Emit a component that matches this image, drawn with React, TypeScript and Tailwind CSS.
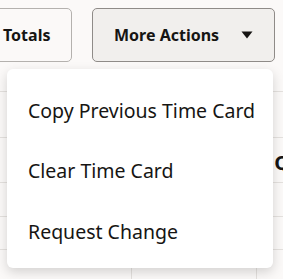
import React from "react";

export default function App() {
  const font = { fontFamily: '"Noto Sans", "Open Sans", sans-serif' };
  return (
    <div
      className="relative w-[283px] h-[279px] overflow-hidden bg-[#fbf9f8] text-[#161513]"
      style={font}
    >
      <div className="flex items-start pt-[8px] gap-[20px]">
        <button className="ml-[-12px] h-[54px] w-[84px] pl-[14px] text-left rounded-[5px] border border-[#b4b1ae] bg-[#fbf9f8] text-[16px] font-bold">
          Totals
        </button>
        <button className="h-[54px] w-[183px] pl-[21px] pr-[21px] rounded-[5px] border border-[#8f8b88] bg-[#f1efed] text-[16px] font-bold flex items-center justify-between">
          <span>More Actions</span>
          <svg width="12" height="8" viewBox="0 0 12 8">
            <path d="M0.5 0.5 H11.5 L6 7.5 Z" fill="#161513" />
          </svg>
        </button>
      </div>
      <div className="flex flex-col">
        <div className="h-[30px] border-b border-[#e4e1de]" />
        <div className="h-[46px] border-b border-[#e4e1de]" />
        <div className="h-[45px] border-b border-[#e4e1de] flex justify-end items-end pb-[9px]">
          <span className="font-bold text-[20px] leading-none mr-[-7px]">Q</span>
        </div>
        <div className="h-[34px] border-b border-[#e4e1de]" />
        <div className="h-[33px] border-b border-[#e4e1de]" />
        <div className="h-[40px] flex">
          <div className="w-[132px] border-r border-[#e4e1de]" />
          <div className="w-[125px] border-r border-[#e4e1de]" />
        </div>
      </div>
      <div className="absolute left-[7px] top-[69px] w-[266px] h-[199px] bg-white rounded-[6px] shadow-[0_4px_12px_rgba(0,0,0,0.16)] pt-[11px] flex flex-col">
        {["Copy Previous Time Card", "Clear Time Card", "Request Change"].map((t) => (
          <div key={t} className="h-[60.5px] shrink-0 flex items-center pl-[21px] text-[19.5px]">
            {t}
          </div>
        ))}
      </div>
    </div>
  );
}
